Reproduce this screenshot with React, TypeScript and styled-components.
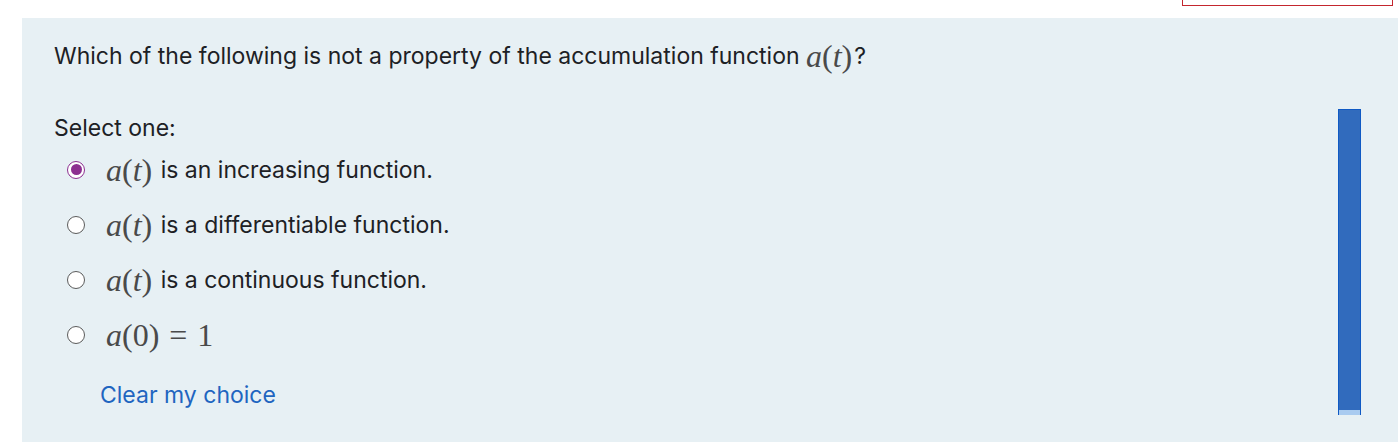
import styled, { createGlobalStyle } from "styled-components";

const GlobalStyle = createGlobalStyle`
  body {
    margin: 0;
    background: #ffffff;
    font-family: Inter, "Liberation Sans", Arial, sans-serif;
  }
`;

const options = [
  { id: "a", math: "a(t)", text: " is an increasing function.", checked: true },
  { id: "b", math: "a(t)", text: " is a differentiable function.", checked: false },
  { id: "c", math: "a(t)", text: " is a continuous function.", checked: false },
  { id: "d", math: "a(0) = 1", text: "", checked: false },
];

const Math = ({ expr }: { expr: string }) => {
  const m = expr.match(/^(\w)\((\w)\)(.*)$/);
  if (!m) return <MathText>{expr}</MathText>;
  const isNum = /\d/.test(m[2]);
  return (
    <MathText>
      <Var>{m[1]}</Var>
      <Paren>(</Paren>
      {isNum ? <Num>{m[2]}</Num> : <Var>{m[2]}</Var>}
      <Paren>)</Paren>
      {m[3] && (
        <>
          <Rel>=</Rel>
          <Num>{m[3].replace(/[=\s]/g, "")}</Num>
        </>
      )}
    </MathText>
  );
};

const App = () => {
  return (
    <>
      <GlobalStyle />
      <TopStrip>
        <FlagBox />
      </TopStrip>
      <Panel>
        <Content>
          <Question>
            Which of the following is not a property of the accumulation function{" "}
            <Math expr="a(t)" />?
          </Question>
          <Prompt>Select one:</Prompt>
          <List>
            {options.map((o) => (
              <Option key={o.id}>
                <Radio checked={o.checked} />
                <Label>
                  <Math expr={o.math} />
                  {o.text}
                </Label>
              </Option>
            ))}
          </List>
          <ClearLink href="#">Clear my choice</ClearLink>
        </Content>
        <Side>
          <Marker />
        </Side>
      </Panel>
    </>
  );
};

const TopStrip = styled.div`
  height: 18px;
  display: flex;
  justify-content: flex-end;
  padding-right: 5px;
  overflow: hidden;
`;

const FlagBox = styled.div`
  width: 209px;
  height: 30px;
  margin-top: -26px;
  border: 1px solid #c4262e;
  background: #ffffff;
`;

const Panel = styled.div`
  margin-left: 22px;
  height: 424px;
  background: #e7f0f4;
  display: flex;
`;

const Content = styled.div`
  flex: 1;
  padding: 22px 0 0 32px;
  color: #1d2125;
`;

const Question = styled.div`
  font-size: 23px;
  line-height: 32px;
  height: 32px;
  display: flex;
  align-items: center;
  white-space: pre;
`;

const MathText = styled.span`
  font-family: "Liberation Serif", "DejaVu Serif", serif;
  font-size: 32px;
  color: #4a4a4a;
  line-height: 1;
  margin-right: 2px;
`;

const Var = styled.span`
  font-style: italic;
`;

const Paren = styled.span`
  font-style: normal;
`;

const Num = styled.span`
  font-style: normal;
  white-space: pre;
`;

const Rel = styled.span`
  margin: 0 10px;
`;

const Prompt = styled.div`
  margin-top: 44px;
  font-size: 23px;
  line-height: 24px;
`;

const List = styled.div`
  margin-top: 2px;
  display: flex;
  flex-direction: column;
`;

const Option = styled.div`
  height: 55px;
  display: flex;
  align-items: center;
  padding-left: 13px;
  gap: 21px;
`;

const Radio = styled.span<{ checked: boolean }>`
  width: 18px;
  height: 18px;
  box-sizing: border-box;
  border-radius: 50%;
  flex-shrink: 0;
  border: 1.5px solid ${(p) => (p.checked ? "#8d2f90" : "#5b5b5b")};
  background: #ffffff;
  position: relative;
  &::after {
    content: "";
    display: ${(p) => (p.checked ? "block" : "none")};
    position: absolute;
    inset: 2.5px;
    border-radius: 50%;
    background: #8d2f90;
  }
`;

const Label = styled.span`
  font-size: 23px;
  display: flex;
  align-items: center;
  white-space: pre;
`;

const ClearLink = styled.a`
  display: inline-block;
  margin-top: 19px;
  margin-left: 46px;
  font-size: 23px;
  line-height: 28px;
  color: #1f65c0;
  text-decoration: none;
`;

const Side = styled.div`
  width: 60px;
  padding-top: 91px;
  display: flex;
`;

const Marker = styled.div`
  width: 23px;
  height: 306px;
  box-sizing: border-box;
  border: 1px solid #0f5ac4;
  border-bottom: none;
  background: linear-gradient(#316bbd 0, #316bbd 300px, #a9cbf0 300px);
`;

export default App;
